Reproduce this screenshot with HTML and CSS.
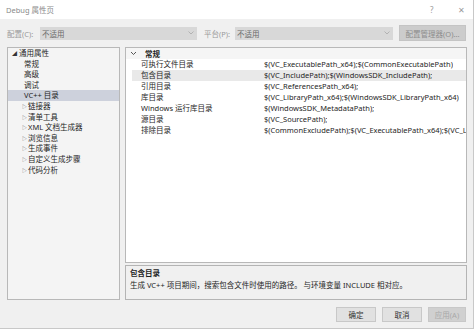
FILE: index.html
```html
<!DOCTYPE html>
<html>
<head>
    <title>Debug 属性页</title>
    <link rel="stylesheet" href="styles.css">
</head>
<body>
    <div class="dialog">
        <div class="titlebar">
            <span class="title">Debug 属性页</span>
            <span class="help">?</span>
            <span class="close">✕</span>
        </div>

        <div class="toolbar">
            <span class="label">配置(C):</span>
            <div class="combo">
                <span>不适用</span>
                <svg width="6" height="4" viewBox="0 0 6 4"><path d="M0.5 0.5 L3 3 L5.5 0.5" fill="none" stroke="#a8a8a8" stroke-width="0.8"/></svg>
            </div>
            <span class="label label-platform">平台(P):</span>
            <div class="combo combo-platform">
                <span>不适用</span>
                <svg width="6" height="4" viewBox="0 0 6 4"><path d="M0.5 0.5 L3 3 L5.5 0.5" fill="none" stroke="#a8a8a8" stroke-width="0.8"/></svg>
            </div>
            <button class="manager" type="button">配置管理器(O)...</button>
        </div>

        <div class="main">
            <ul class="tree">
                <li class="node root"><span class="expanded">◢</span>通用属性</li>
                <li class="node child">常规</li>
                <li class="node child">高级</li>
                <li class="node child">调试</li>
                <li class="node child selected">VC++ 目录</li>
                <li class="node"><span class="collapsed">▷</span>链接器</li>
                <li class="node"><span class="collapsed">▷</span>清单工具</li>
                <li class="node"><span class="collapsed">▷</span>XML 文档生成器</li>
                <li class="node"><span class="collapsed">▷</span>浏览信息</li>
                <li class="node"><span class="collapsed">▷</span>生成事件</li>
                <li class="node"><span class="collapsed">▷</span>自定义生成步骤</li>
                <li class="node"><span class="collapsed">▷</span>代码分析</li>
            </ul>

            <div class="content">
                <div class="grid">
                    <div class="group">
                        <svg width="7" height="5" viewBox="0 0 7 5"><path d="M1 1 L3.5 3.5 L6 1" fill="none" stroke="#444" stroke-width="0.9"/></svg>
                        <span>常规</span>
                    </div>
                    <div class="row"><span class="name">可执行文件目录</span><span class="value">$(VC_ExecutablePath_x64);$(CommonExecutablePath)</span></div>
                    <div class="row current"><span class="name">包含目录</span><span class="value">$(VC_IncludePath);$(WindowsSDK_IncludePath);</span></div>
                    <div class="row"><span class="name">引用目录</span><span class="value">$(VC_ReferencesPath_x64);</span></div>
                    <div class="row"><span class="name">库目录</span><span class="value">$(VC_LibraryPath_x64);$(WindowsSDK_LibraryPath_x64)</span></div>
                    <div class="row"><span class="name">Windows 运行库目录</span><span class="value">$(WindowsSDK_MetadataPath);</span></div>
                    <div class="row"><span class="name">源目录</span><span class="value">$(VC_SourcePath);</span></div>
                    <div class="row"><span class="name">排除目录</span><span class="value">$(CommonExcludePath);$(VC_ExecutablePath_x64);$(VC_L</span></div>
                </div>

                <div class="desc">
                    <div class="desc-title">包含目录</div>
                    <div class="desc-text">生成 VC++ 项目期间，搜索包含文件时使用的路径。 与环境变量 INCLUDE 相对应。</div>
                </div>
            </div>
        </div>

        <div class="footer">
            <button type="button">确定</button>
            <button type="button">取消</button>
            <button type="button" class="disabled">应用(A)</button>
        </div>
    </div>
</body>
</html>
```

FILE: styles.css
```css
body {
    margin: 0;
    background-color: #ffffff;
    font-family: "Noto Sans", "Noto Sans CJK SC", sans-serif;
    font-size: 7.5px;
    color: #1e1e1e;
}

.dialog {
    width: 474px;
    height: 329px;
    background-color: #f0f0f0;
    box-sizing: border-box;
    border-right: 1px solid #c8c8c8;
    border-bottom: 1px solid #c8c8c8;
}

.titlebar {
    display: flex;
    align-items: center;
    height: 19px;
    padding-left: 6px;
    background-color: #ffffff;
    color: #8a8a8a;
}

.title {
    flex: 1;
}

.help {
    width: 28px;
    font-size: 8px;
    color: #9a9a9a;
}

.close {
    width: 15px;
    font-size: 8px;
    color: #9a9a9a;
}

.toolbar {
    display: flex;
    align-items: center;
    height: 28px;
    padding-left: 7px;
}

.label {
    width: 33px;
    color: #9a9a9a;
}

.label-platform {
    width: 31px;
    margin-left: 7px;
}

.combo {
    display: flex;
    align-items: center;
    justify-content: space-between;
    width: 157px;
    height: 13px;
    box-sizing: border-box;
    padding: 0 3px 0 2px;
    background-color: #d8d8d8;
    color: #6a6a6a;
}

.combo-platform {
    width: 158px;
}

.manager {
    width: 67px;
    height: 16px;
    margin-left: 6px;
    padding: 0;
    border: 1px solid #c4c4c4;
    background-color: #cccccc;
    color: #8c8c8c;
    font-family: inherit;
    font-size: 7.5px;
}

.main {
    display: flex;
    padding-left: 7px;
}

.tree {
    width: 113px;
    height: 253px;
    box-sizing: border-box;
    margin: 0;
    padding: 0;
    list-style: none;
    background-color: #f4f4f4;
    border: 1px solid #b8b8b8;
}

.node {
    height: 10.6px;
    line-height: 10.6px;
    padding-left: 14px;
    white-space: nowrap;
}

.root {
    padding-left: 4px;
}

.child {
    padding-left: 16px;
}

.selected {
    background-color: #cdd1dc;
}

.expanded {
    display: inline-block;
    width: 7px;
    font-size: 5px;
    color: #333;
    vertical-align: top;
}

.collapsed {
    display: inline-block;
    width: 6px;
    font-size: 5px;
    color: #666;
    vertical-align: top;
}

.content {
    display: flex;
    flex-direction: column;
    width: 342px;
    margin-left: 5px;
}

.grid {
    height: 216px;
    box-sizing: border-box;
    background-color: #ffffff;
    border: 1px solid #b8b8b8;
    overflow: hidden;
}

.group {
    display: flex;
    align-items: center;
    height: 11px;
    padding-left: 4px;
    background-color: #f5f5f5;
    font-weight: bold;
}

.group svg {
    margin-right: 8px;
}

.row {
    display: flex;
    height: 11px;
    line-height: 11px;
    margin-left: 6px;
    white-space: nowrap;
}

.current {
    background-color: #e9e9e9;
}

.name {
    width: 132px;
    flex-shrink: 0;
    box-sizing: border-box;
    padding-left: 9px;
}

.value {
    overflow: hidden;
}

.desc {
    height: 35px;
    box-sizing: border-box;
    margin-top: 2px;
    padding: 2px 4px;
    border: 1px solid #b4b4b4;
    background-color: #f0f0f0;
}

.desc-title {
    font-weight: bold;
    line-height: 11px;
}

.desc-text {
    line-height: 12px;
}

.footer {
    display: flex;
    justify-content: flex-end;
    gap: 6px;
    padding: 7px 7px 0 0;
}

.footer button {
    width: 40px;
    height: 15px;
    padding: 0;
    border: 1px solid #c8c8c8;
    background-color: #e1e1e1;
    color: #333;
    font-family: inherit;
    font-size: 7.5px;
}

.footer .disabled {
    width: 38px;
    background-color: #d0d0d0;
    color: #a8a8a8;
}
```
